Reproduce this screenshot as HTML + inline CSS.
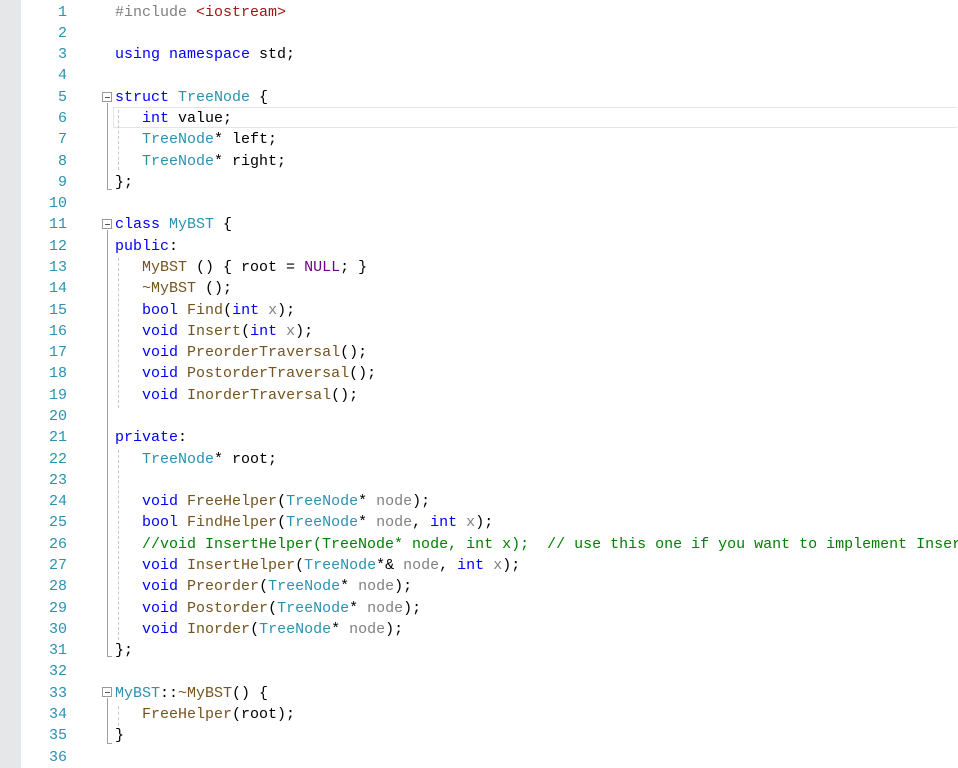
<!DOCTYPE html>
<html><head><meta charset="utf-8"><style>
html,body{margin:0;width:958px;height:768px;overflow:hidden;}
body{background:#fff;position:relative;font-family:"Liberation Mono",monospace;font-size:15px;}
#wrap{position:absolute;left:0;top:0;width:958px;height:768px;overflow:hidden;}
.g{position:absolute;left:0;top:0;width:21px;height:768px;background:#e6e7e8;}
.ln{position:absolute;left:20px;width:47px;text-align:right;color:#2b91af;line-height:21.29px;height:21.29px;}
.c{position:absolute;left:115px;width:843px;overflow:hidden;white-space:pre;line-height:21.29px;height:21.29px;color:#000;}
.k{color:#0000ff}.t{color:#2b91af}.f{color:#74531f}.p{color:#808080}.m{color:#6f008a}.s{color:#a31515}.cm{color:#008000}
.box{position:absolute;left:102px;width:8px;height:8px;border:1px solid #999;background:#fff;}
.box:after{content:"";position:absolute;left:2px;top:4px;width:5px;height:1px;background:#555;}
.vl{position:absolute;left:107px;width:4px;border-left:1px solid #a0a0a0;border-bottom:1px solid #a0a0a0;}
.dg{position:absolute;left:118px;border-left:1px dashed #c8c8c8;}
.cur{position:absolute;left:113px;top:107px;width:843px;height:19px;border:1px solid #e4e4e4;border-right:none;}
</style></head><body><div id="wrap">
<div class="g"></div>
<div class="cur"></div>
<div id="n"></div>
<div class="box" style="top:92px"></div><div class="vl" style="top:103px;height:86px"></div>
<div class="box" style="top:219px"></div><div class="vl" style="top:230px;height:426px"></div>
<div class="box" style="top:687px"></div><div class="vl" style="top:698px;height:45px"></div>
<div class="dg" style="top:110px;height:60px"></div>
<div class="dg" style="top:258px;height:150px"></div>
<div class="dg" style="top:450px;height:190px"></div>
<div class="dg" style="top:706px;height:20px"></div>
</div>
<script>
var L=[
'<span class="p">#include</span> <span class="s">&lt;iostream&gt;</span>','',
'<span class="k">using</span> <span class="k">namespace</span> std;','',
'<span class="k">struct</span> <span class="t">TreeNode</span> {',
'   <span class="k">int</span> value;',
'   <span class="t">TreeNode</span>* left;',
'   <span class="t">TreeNode</span>* right;',
'};','',
'<span class="k">class</span> <span class="t">MyBST</span> {',
'<span class="k">public</span>:',
'   <span class="f">MyBST</span> () { root = <span class="m">NULL</span>; }',
'   <span class="f">~MyBST</span> ();',
'   <span class="k">bool</span> <span class="f">Find</span>(<span class="k">int</span> <span class="p">x</span>);',
'   <span class="k">void</span> <span class="f">Insert</span>(<span class="k">int</span> <span class="p">x</span>);',
'   <span class="k">void</span> <span class="f">PreorderTraversal</span>();',
'   <span class="k">void</span> <span class="f">PostorderTraversal</span>();',
'   <span class="k">void</span> <span class="f">InorderTraversal</span>();','',
'<span class="k">private</span>:',
'   <span class="t">TreeNode</span>* root;','',
'   <span class="k">void</span> <span class="f">FreeHelper</span>(<span class="t">TreeNode</span>* <span class="p">node</span>);',
'   <span class="k">bool</span> <span class="f">FindHelper</span>(<span class="t">TreeNode</span>* <span class="p">node</span>, <span class="k">int</span> <span class="p">x</span>);',
'   <span class="cm">//void InsertHelper(TreeNode* node, int x);  // use this one if you want to implement Inser</span>',
'   <span class="k">void</span> <span class="f">InsertHelper</span>(<span class="t">TreeNode</span>*&amp; <span class="p">node</span>, <span class="k">int</span> <span class="p">x</span>);',
'   <span class="k">void</span> <span class="f">Preorder</span>(<span class="t">TreeNode</span>* <span class="p">node</span>);',
'   <span class="k">void</span> <span class="f">Postorder</span>(<span class="t">TreeNode</span>* <span class="p">node</span>);',
'   <span class="k">void</span> <span class="f">Inorder</span>(<span class="t">TreeNode</span>* <span class="p">node</span>);',
'};','',
'<span class="t">MyBST</span>::<span class="f">~MyBST</span>() {',
'   <span class="f">FreeHelper</span>(root);',
'}',''];
var h='';
for(var i=0;i<L.length;i++){var t=1.5+i*21.29;
h+='<div class="ln" style="top:'+t+'px">'+(i+1)+'</div><div class="c" style="top:'+t+'px">'+L[i]+'</div>';}
document.getElementById('n').innerHTML=h;
</script>
</body></html>
